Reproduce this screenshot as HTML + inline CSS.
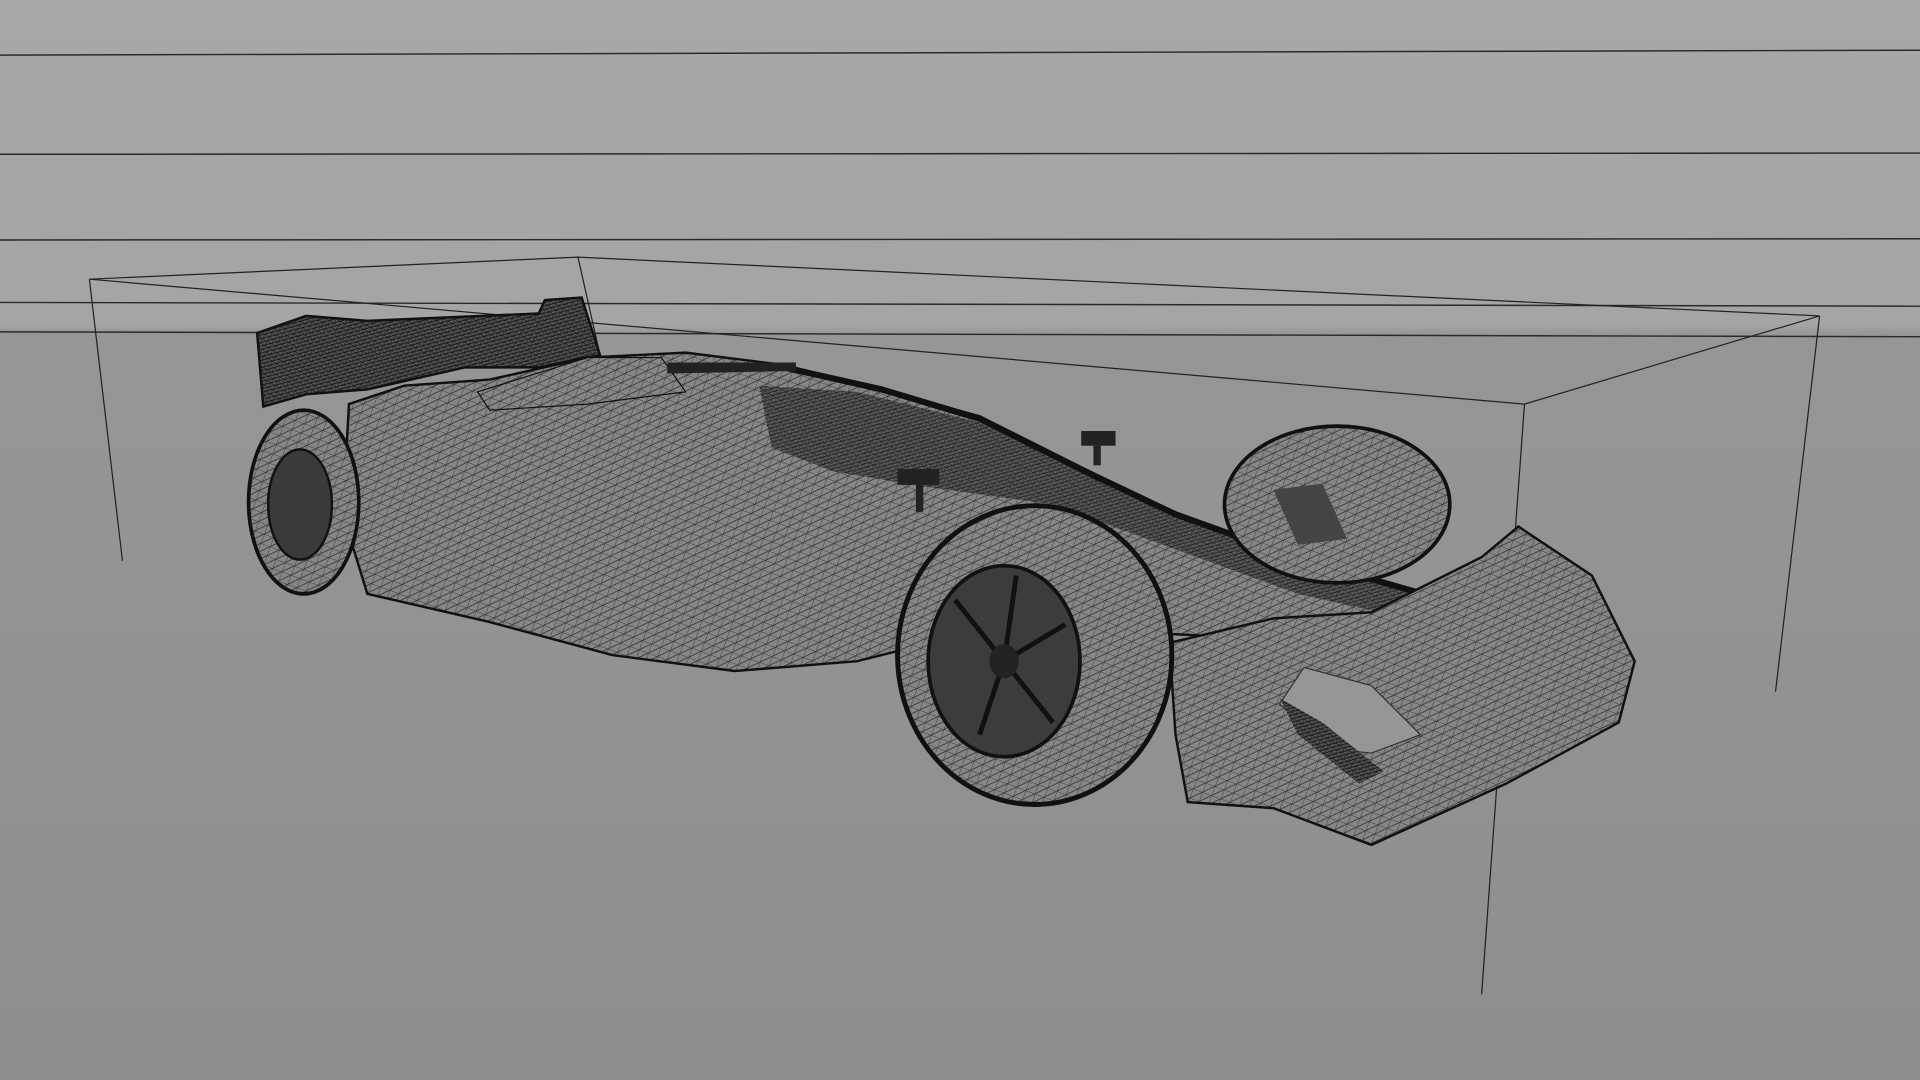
<!DOCTYPE html>
<html><head><meta charset="utf-8"><style>
html,body{margin:0;padding:0;width:1920px;height:1080px;overflow:hidden;background:#9a9b9b}
svg{display:block}
</style></head><body>
<svg width="1920" height="1080" viewBox="0 0 1568 882" preserveAspectRatio="none" xmlns="http://www.w3.org/2000/svg">
<defs>
<linearGradient id="bg" x1="0" y1="0" x2="0" y2="1">
<stop offset="0" stop-color="#a6a7a6"/>
<stop offset="0.3" stop-color="#a4a5a4"/>
<stop offset="0.31" stop-color="#959696"/>
<stop offset="1" stop-color="#8d8e8e"/>
</linearGradient>
<pattern id="mesh" width="8" height="8" patternUnits="userSpaceOnUse" patternTransform="rotate(20)">
<rect width="8" height="8" fill="#858686"/>
<path d="M0 0H8M0 0V8M0 8L8 0" stroke="#2a2a2a" stroke-width="0.6" fill="none"/>
</pattern>
<pattern id="meshd" width="4" height="4" patternUnits="userSpaceOnUse" patternTransform="rotate(30)">
<rect width="4" height="4" fill="#555"/>
<path d="M0 0H4M0 0V4M0 4L4 0" stroke="#111" stroke-width="0.7" fill="none"/>
</pattern>
</defs>
<rect width="1568" height="882" fill="url(#bg)"/>
<g stroke="#2a2a2a" stroke-width="1.2" fill="none">
<path d="M0 45L1568 41"/><path d="M0 126L1568 125"/><path d="M0 196L1568 195"/>
<path d="M0 247L1568 250"/><path d="M0 271L1568 275"/>
</g>
<g stroke="#222" stroke-width="1" fill="none">
<path d="M73 228L472 210L1486 258L1245 330L73 228"/>
<path d="M73 228L100 458"/><path d="M1245 330L1210 812"/><path d="M1486 258L1450 565"/>
<path d="M472 210L490 290"/>
</g>
<path d="M210 272L250 258L300 262L440 256L445 245L475 243L490 290L440 300L380 300L300 318L250 322L215 332Z" fill="url(#meshd)" stroke="#111" stroke-width="2"/>
<path d="M285 330L330 315L400 310L480 292L560 288L640 298L720 318L800 340L880 380L960 420L1060 455L1180 490L1250 515L1262 535L1230 545L1120 540L1000 520L900 515L780 520L700 540L600 548L500 535L400 508L300 485L280 420Z" fill="url(#mesh)" stroke="#111" stroke-width="2"/>
<path d="M620 315L700 320L800 345L880 385L960 420L1060 458L1180 492L1240 515L1180 512L1060 485L950 445L860 412L760 398L680 385L630 365Z" fill="url(#meshd)" opacity="0.85"/>
<path d="M640 300L720 318L800 342L880 382L960 420L1060 456L1180 490L1250 514" stroke="#111" stroke-width="5" fill="none"/>
<path d="M390 320L480 292L540 292L560 320L480 330L400 335Z" fill="url(#mesh)" stroke="#111"/>
<ellipse cx="248" cy="410" rx="45" ry="75" fill="url(#mesh)" stroke="#111" stroke-width="3"/>
<ellipse cx="245" cy="412" rx="26" ry="45" fill="#3a3a3a" stroke="#111" stroke-width="2"/>
<ellipse cx="1092" cy="412" rx="92" ry="64" fill="url(#mesh)" stroke="#111" stroke-width="3"/>
<path d="M1040 400L1080 395L1100 440L1060 445Z" fill="#444"/>
<path d="M955 525L1040 505L1120 500L1210 455L1240 430L1300 470L1335 540L1322 590L1230 640L1120 690L1040 660L970 655L960 600Z" fill="url(#mesh)" stroke="#111" stroke-width="2"/>
<path d="M1045 575L1065 545L1120 560L1160 600L1120 615L1090 612Z" fill="#959696" stroke="#333"/>
<path d="M1045 570L1080 590L1130 630L1110 640L1060 600Z" fill="url(#meshd)"/>
<ellipse cx="845" cy="535" rx="112" ry="122" fill="url(#mesh)" stroke="#111" stroke-width="4"/>
<ellipse cx="820" cy="540" rx="62" ry="78" fill="#3c3c3c" stroke="#111" stroke-width="3"/>
<g stroke="#111" stroke-width="4">
<path d="M820 540L780 490M820 540L800 600M820 540L860 590M820 540L870 510M820 540L830 470"/>
</g>
<ellipse cx="820" cy="540" rx="12" ry="14" fill="#222"/>
<rect x="883" y="352" width="28" height="12" fill="#222"/><rect x="893" y="364" width="6" height="16" fill="#222"/>
<rect x="733" y="383" width="34" height="13" fill="#222"/><rect x="748" y="396" width="6" height="22" fill="#222"/>
<path d="M545 296L650 296L650 303L545 305Z" fill="#222"/>
</svg>
</body></html>
